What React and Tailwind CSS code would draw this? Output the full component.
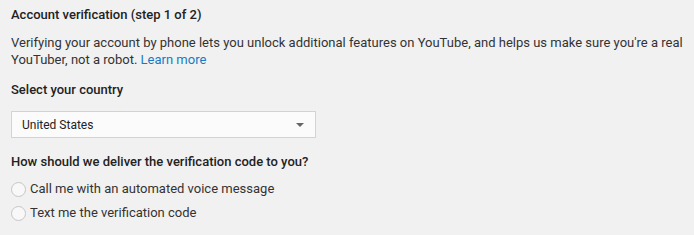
import React from 'react';

function Radio({ label }) {
  return (
    <label className="flex items-center h-[24px] cursor-pointer">
      <span className="w-[15px] h-[15px] rounded-full border border-[#c6c6c6] bg-[#f8f8f8] mr-[4px] shrink-0" />
      <span className="text-[13px] text-[#333]">{label}</span>
    </label>
  );
}

export default function App() {
  return (
    <div
      className="w-[694px] h-[235px] bg-[#f1f1f1] px-[11px] pt-[5px] text-[#333]"
      style={{ fontFamily: 'Roboto, Arial, sans-serif' }}
    >
      <h2 className="text-[13px] font-medium text-[#222] leading-[20px]">Account verification (step 1 of 2)</h2>

      <p className="mt-[9px] text-[13px] leading-[17px] text-[#333]">
        Verifying your account by phone lets you unlock additional features on YouTube, and helps us make sure you're a real
        YouTuber, not a robot. <a href="#" className="text-[#167ac6]">Learn more</a>
      </p>

      <h3 className="mt-[13px] text-[13px] font-medium text-[#222] leading-[18px]">Select your country</h3>

      <div className="mt-[12px] w-[305px] h-[27px] border border-[#d3d3d3] bg-[#fbfbfb] flex items-center justify-between pl-[10px] pr-[11px]">
        <span className="text-[12px] text-[#222]">United States</span>
        <svg width="8" height="4" viewBox="0 0 8 4">
          <path d="M0 0h8L4 4z" fill="#666" />
        </svg>
      </div>

      <h3 className="mt-[15px] text-[13px] font-medium text-[#222] leading-[18px]">How should we deliver the verification code to you?</h3>

      <div className="mt-[6px] flex flex-col">
        <Radio label="Call me with an automated voice message" />
        <Radio label="Text me the verification code" />
      </div>
    </div>
  );
}
